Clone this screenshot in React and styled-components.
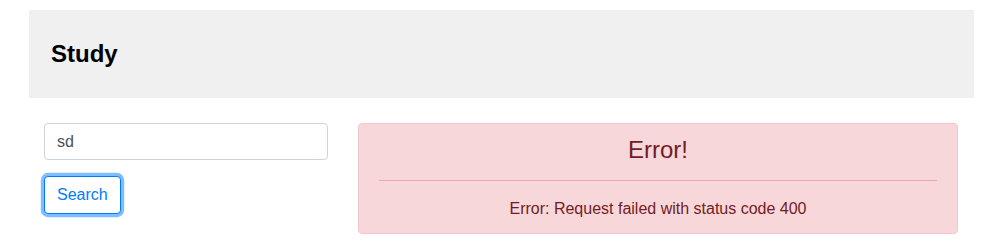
import React, { useState } from 'react';
import styled, { createGlobalStyle } from 'styled-components';

// 기본 페이지 style
const GlobalStyle = createGlobalStyle`
  * {
    box-sizing: border-box;
  }
  body {
    margin: 0;
    background: #fff;
    font-family: "Liberation Sans", Arial, sans-serif;
    font-size: 16px;
    line-height: 1.5;
    color: #212529;
  }
`;

const Page = styled.div`
  padding: 10px 12px 0 29px;
`;

// 상단 헤더 영역
const Header = styled.header`
  display: flex;
  align-items: center;
  height: 88px;
  padding: 0 22px;
  background: #f0f0f0;
`;

const Title = styled.h1`
  margin: 0;
  font-size: 24px;
  font-weight: 700;
  line-height: 1.2;
  color: #000;
`;

const Row = styled.div`
  display: grid;
  grid-template-columns: 314px 630px;
  margin-top: 25px;
`;

const Col = styled.div`
  padding: 0 15px;
`;

const FormGroup = styled.div`
  margin-bottom: 16px;
`;

const Input = styled.input`
  display: block;
  width: 100%;
  height: 37px;
  padding: 6px 12px;
  font-family: inherit;
  font-size: 16px;
  color: #495057;
  background: #fff;
  border: 1px solid #ced4da;
  border-radius: 4px;
  outline: none;
`;

const Button = styled.button`
  display: inline-block;
  height: 38px;
  padding: 6px 12px;
  font-family: inherit;
  font-size: 16px;
  line-height: 1.5;
  color: #007bff;
  background: #fff;
  border: 1px solid #007bff;
  border-radius: 4px;
  box-shadow: ${({ $focused }) =>
    $focused ? '0 0 0 3.2px rgba(0, 123, 255, 0.5)' : 'none'};
  cursor: pointer;
`;

// 에러 알림 영역
const Alert = styled.div`
  padding: 12px 20px;
  text-align: center;
  color: #721c24;
  background: #f8d7da;
  border: 1px solid #f5c6cb;
  border-radius: 4px;
`;

const AlertHeading = styled.h4`
  margin: 0 0 8px;
  font-size: 24px;
  font-weight: 400;
  line-height: 1.2;
`;

const Divider = styled.hr`
  margin: 15px 0 16px;
  height: 0;
  border: 0;
  border-top: 1px solid #eea6b0;
`;

const AlertText = styled.p`
  margin: 0;
`;

const App = () => {
  const [query, setQuery] = useState('sd'); // 검색어 state

  return (
    <>
      <GlobalStyle />
      <Page>
        <Header>
          <Title>Study</Title>
        </Header>
        <Row>
          <Col>
            <FormGroup>
              <Input
                value={query}
                onChange={(e) => setQuery(e.target.value)}
              />
            </FormGroup>
            <Button $focused>Search</Button>
          </Col>
          <Col>
            <Alert>
              <AlertHeading>Error!</AlertHeading>
              <Divider />
              <AlertText>Error: Request failed with status code 400</AlertText>
            </Alert>
          </Col>
        </Row>
      </Page>
    </>
  );
};

export default App;
